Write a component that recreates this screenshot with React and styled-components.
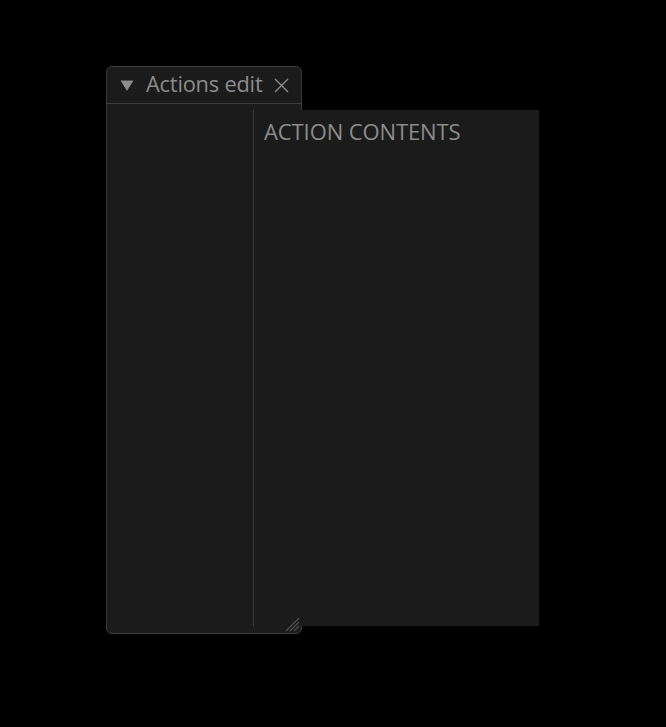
import React from "react";
import styled, { createGlobalStyle } from "styled-components";

const Global = createGlobalStyle`
  html, body {
    margin: 0;
    background: #000;
  }
  body {
    font-family: "Open Sans", "Noto Sans", sans-serif;
    color: #8c8c8c;
  }
`;

const Page = styled.div`
  padding: 66px 0 0 106px;
  min-height: 727px;
  box-sizing: border-box;
`;

const Window = styled.div`
  position: relative;
  width: 196px;
  height: 568px;
  box-sizing: border-box;
  background: #1b1b1b;
  border: 1px solid #3c3c3c;
  border-radius: 6px;
  display: flex;
  flex-direction: column;
`;

const TitleBar = styled.div`
  height: 36px;
  border-bottom: 1px solid #3c3c3c;
  display: flex;
  align-items: center;
  padding: 0 12px 0 13px;
`;

const Title = styled.span`
  flex: 1;
  font-size: 21.8px;
  margin-left: 12px;
  letter-spacing: -0.2px;
  white-space: nowrap;
  line-height: 1;
  padding-bottom: 2px;
`;

const Body = styled.div`
  flex: 1;
  display: flex;
  padding-top: 6px;
  padding-bottom: 7px;
`;

const SidePanel = styled.div`
  width: 146px;
  flex-shrink: 0;
`;

const ContentPanel = styled.div`
  width: 286px;
  flex-shrink: 0;
  box-sizing: border-box;
  border-left: 1px solid #3a3a3a;
  background: #1b1b1b;
  padding: 7px 0 0 10px;
`;

const Heading = styled.div`
  font-size: 22px;
  line-height: 28px;
  letter-spacing: -0.1px;
`;

const Grip = styled.svg`
  position: absolute;
  right: 1px;
  bottom: 1px;
`;

const CollapseIcon = () => (
  <svg width="14" height="13" viewBox="0 0 14 13">
    <path d="M0.5 1.5 H13.5 L7 12 Z" fill="#8c8c8c" />
  </svg>
);

const CloseIcon = () => (
  <svg width="15" height="15" viewBox="0 0 15 15">
    <path d="M1 1 L14 14 M14 1 L1 14" stroke="#8c8c8c" strokeWidth="1.4" />
  </svg>
);

export default function App() {
  return (
    <>
      <Global />
      <Page>
        <Window>
          <TitleBar>
            <CollapseIcon />
            <Title>Actions edit</Title>
            <CloseIcon />
          </TitleBar>
          <Body>
            <SidePanel />
            <ContentPanel>
              <Heading>ACTION CONTENTS</Heading>
            </ContentPanel>
          </Body>
          <Grip width="15" height="15" viewBox="0 0 15 15">
            <path d="M1 14 L14 1 M5 14 L14 5 M9 14 L14 9" stroke="#505050" strokeWidth="1.2" />
          </Grip>
        </Window>
      </Page>
    </>
  );
}
